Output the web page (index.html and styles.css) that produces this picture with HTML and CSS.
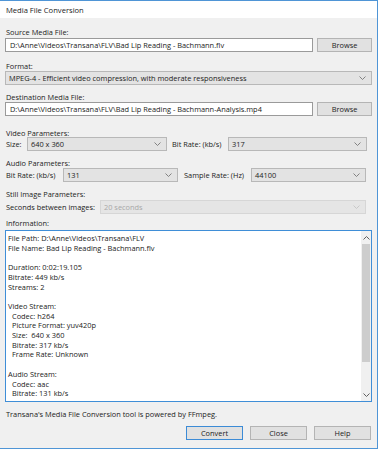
FILE: index.html
```html
<!DOCTYPE html>
<html lang="en">
    <head>
        <meta charset="UTF-8">
        <title>Media File Conversion</title>
        <link rel="stylesheet" href="styles.css">
    </head>
    <body>
        <div class="window">
            <div class="titlebar">Media File Conversion</div>

            <div class="content">
                <div class="label first">Source Media File:</div>
                <div class="file-row">
                    <div class="textbox">D:\Anne\Videos\Transana\FLV\Bad Lip Reading - Bachmann.flv</div>
                    <div class="button">Browse</div>
                </div>

                <div class="label">Format:</div>
                <div class="combo wide">
                    <span>MPEG-4 - Efficient video compression, with moderate responsiveness</span>
                    <svg width="7" height="4" viewBox="0 0 7 4"><path d="M0.5 0.5 L3.5 3.5 L6.5 0.5" fill="none" stroke="#777" stroke-width="0.9"/></svg>
                </div>

                <div class="label dest">Destination Media File:</div>
                <div class="file-row">
                    <div class="textbox">D:\Anne\Videos\Transana\FLV\Bad Lip Reading - Bachmann-Analysis.mp4</div>
                    <div class="button">Browse</div>
                </div>

                <div class="label group video">Video Parameters:</div>
                <div class="param-row">
                    <span class="size-label">Size:</span>
                    <div class="combo size-combo">
                        <span>640 x 360</span>
                        <svg width="7" height="4" viewBox="0 0 7 4"><path d="M0.5 0.5 L3.5 3.5 L6.5 0.5" fill="none" stroke="#777" stroke-width="0.9"/></svg>
                    </div>
                    <span class="vrate-label">Bit Rate: (kb/s)</span>
                    <div class="combo vrate-combo">
                        <span>317</span>
                        <svg width="7" height="4" viewBox="0 0 7 4"><path d="M0.5 0.5 L3.5 3.5 L6.5 0.5" fill="none" stroke="#777" stroke-width="0.9"/></svg>
                    </div>
                </div>

                <div class="label group">Audio Parameters:</div>
                <div class="param-row">
                    <span class="arate-label">Bit Rate: (kb/s)</span>
                    <div class="combo arate-combo">
                        <span>131</span>
                        <svg width="7" height="4" viewBox="0 0 7 4"><path d="M0.5 0.5 L3.5 3.5 L6.5 0.5" fill="none" stroke="#777" stroke-width="0.9"/></svg>
                    </div>
                    <span class="sample-label">Sample Rate: (Hz)</span>
                    <div class="combo sample-combo">
                        <span>44100</span>
                        <svg width="7" height="4" viewBox="0 0 7 4"><path d="M0.5 0.5 L3.5 3.5 L6.5 0.5" fill="none" stroke="#777" stroke-width="0.9"/></svg>
                    </div>
                </div>

                <div class="label group">Still Image Parameters:</div>
                <div class="param-row still">
                    <span class="still-label">Seconds between images:</span>
                    <div class="combo disabled still-combo">
                        <span>20 seconds</span>
                        <svg width="7" height="4" viewBox="0 0 7 4"><path d="M0.5 0.5 L3.5 3.5 L6.5 0.5" fill="none" stroke="#c4c4c4" stroke-width="0.9"/></svg>
                    </div>
                </div>

                <div class="label info-label">Information:</div>
                <div class="info">
                    <div class="info-text">
                        <div>File Path: D:\Anne\Videos\Transana\FLV</div>
                        <div>File Name: Bad Lip Reading - Bachmann.flv</div>
                        <div>&nbsp;</div>
                        <div>Duration: 0:02:19.105</div>
                        <div>Bitrate: 449 kb/s</div>
                        <div>Streams: 2</div>
                        <div>&nbsp;</div>
                        <div>Video Stream:</div>
                        <div class="indent">Codec: h264</div>
                        <div class="indent">Picture Format: yuv420p</div>
                        <div class="indent">Size:&nbsp; 640 x 360</div>
                        <div class="indent">Bitrate: 317 kb/s</div>
                        <div class="indent">Frame Rate: Unknown</div>
                        <div>&nbsp;</div>
                        <div>Audio Stream:</div>
                        <div class="indent">Codec: aac</div>
                        <div class="indent">Bitrate: 131 kb/s</div>
                    </div>
                    <div class="scrollbar">
                        <div class="arrow">
                            <svg width="7" height="4" viewBox="0 0 7 4"><path d="M0.5 3.5 L3.5 0.5 L6.5 3.5" fill="none" stroke="#606060" stroke-width="1"/></svg>
                        </div>
                        <div class="track">
                            <div class="thumb"></div>
                        </div>
                        <div class="arrow">
                            <svg width="7" height="4" viewBox="0 0 7 4"><path d="M0.5 0.5 L3.5 3.5 L6.5 0.5" fill="none" stroke="#606060" stroke-width="1"/></svg>
                        </div>
                    </div>
                </div>

                <div class="footer-note">Transana's Media File Conversion tool is powered by FFmpeg.</div>

                <div class="buttons">
                    <div class="button default">Convert</div>
                    <div class="button">Close</div>
                    <div class="button">Help</div>
                </div>
            </div>
        </div>
    </body>
</html>
```

FILE: styles.css
```css
* {
    box-sizing: border-box;
}
body {
    margin: 0;
    background: #ffffff;
    font-family: "Open Sans", "Noto Sans", sans-serif;
    font-size: 7.4px;
    color: #222222;
}
.window {
    width: 378px;
    height: 449px;
    background: #f0f0f0;
    border-top: 1px solid #4f95d6;
    border-right: 1px solid #4f95d6;
    border-bottom: 1px solid #4f95d6;
}
.titlebar {
    height: 17px;
    background: #ffffff;
    padding-left: 6px;
    line-height: 18px;
    font-size: 7.6px;
    color: #222;
}
.content {
    padding: 0 5px;
}

/* labels above each group */
.label {
    line-height: 10px;
    height: 10px;
    padding-left: 1px;
    margin-top: 9px;
}
.label.dest {
    margin-top: 7px;
}
.label.group {
    line-height: 8px;
    height: 8px;
    margin-top: 8px;
}
.label.group.video {
    margin-top: 13px;
}
.label.info-label {
    line-height: 8px;
    height: 8px;
    margin-top: 5px;
}

.file-row {
    display: flex;
    gap: 4px;
    height: 14px;
    margin-top: 1px;
}
.label.dest + .file-row {
    margin-top: 0;
}
.textbox {
    flex: 1;
    background: #ffffff;
    border: 1px solid #9a9a9a;
    padding-left: 4px;
    line-height: 12px;
    white-space: nowrap;
    overflow: hidden;
}
.button {
    width: 55px;
    height: 14px;
    background: #e1e1e1;
    border: 1px solid #b4b4b4;
    text-align: center;
    line-height: 12px;
}
.button.default {
    border-color: #3c8bd6;
}

/* drop-down boxes */
.combo {
    height: 14px;
    background: #e3e3e3;
    border: 1px solid #b8b8b8;
    display: flex;
    align-items: center;
    justify-content: space-between;
    padding: 0 5px 0 3px;
    white-space: nowrap;
}
.combo.disabled {
    background: #e5e5e5;
    border-color: #d6d6d6;
    color: #a8a8a8;
}

.param-row {
    display: flex;
    align-items: center;
    height: 14px;
    margin-top: 1px;
}
.label.group.video + .param-row {
    margin-top: 0;
}
.param-row.still {
    margin-top: 2px;
}
.size-label {
    width: 22px;
    padding-left: 1px;
}
.size-combo {
    width: 140px;
}
.vrate-label {
    width: 61px;
    padding-left: 5px;
}
.vrate-combo {
    width: 139px;
}
.arate-label {
    width: 58px;
    padding-left: 1px;
}
.arate-combo {
    width: 115px;
}
.sample-label {
    width: 73px;
    padding-left: 6px;
}
.sample-combo {
    width: 115px;
}
.still-label {
    width: 95px;
    padding-left: 1px;
}
.still-combo {
    width: 266px;
}

/* information box */
.info {
    margin-top: 3px;
    height: 172px;
    background: #ffffff;
    border: 1px solid #3f8ed7;
    display: flex;
    overflow: hidden;
}
.info-text {
    flex: 1;
    padding: 3px 0 0 2px;
    line-height: 9.7px;
    overflow: hidden;
}
.info-text .indent {
    padding-left: 4px;
}
.scrollbar {
    width: 10px;
    background: #f0f0f0;
    display: flex;
    flex-direction: column;
}
.arrow {
    height: 13px;
    display: flex;
    align-items: center;
    justify-content: center;
}
.track {
    flex: 1;
}
.thumb {
    height: 118px;
    margin: 0 1px;
    background: #cdcdcd;
}

.footer-note {
    margin-top: 7px;
    line-height: 10px;
    height: 10px;
    padding-left: 1px;
}
.buttons {
    display: flex;
    justify-content: flex-end;
    gap: 7px;
    margin-top: 7px;
    padding-right: 1px;
}
.buttons .button {
    width: 57px;
}
```
